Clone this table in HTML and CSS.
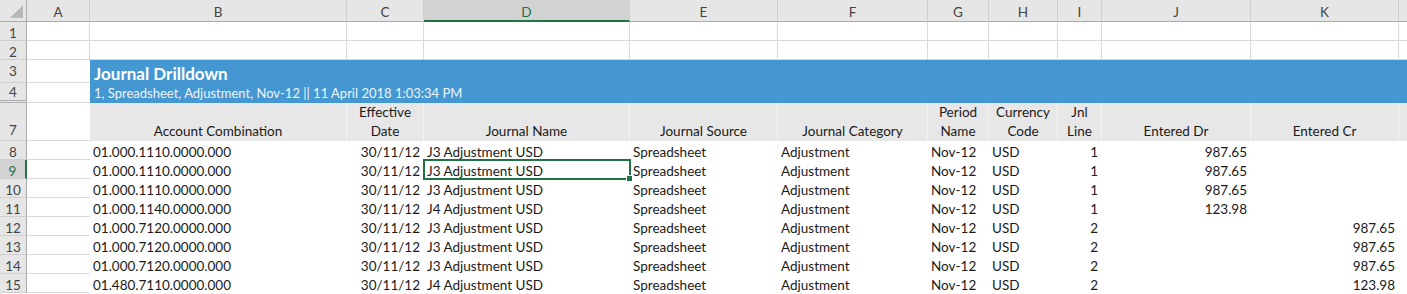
FILE: index.html
```html
<!DOCTYPE html>
<html lang="en">
<head>
    <meta charset="UTF-8">
    <title>Journal Drilldown</title>
    <link rel="stylesheet" href="styles.css">
</head>
<body>
    <div class="sheet">
        <!-- column headers -->
        <div class="corner"><span class="corner-mark"></span></div>
        <div class="col-head">A</div>
        <div class="col-head">B</div>
        <div class="col-head">C</div>
        <div class="col-head active">D</div>
        <div class="col-head">E</div>
        <div class="col-head">F</div>
        <div class="col-head">G</div>
        <div class="col-head">H</div>
        <div class="col-head">I</div>
        <div class="col-head">J</div>
        <div class="col-head">K</div>
        <div class="col-head last"></div>

        <!-- rows 1-2 -->
        <div class="row-head">1</div>
        <div class="cell"></div><div class="cell"></div><div class="cell"></div><div class="cell"></div><div class="cell"></div><div class="cell"></div>
        <div class="cell"></div><div class="cell"></div><div class="cell"></div><div class="cell"></div><div class="cell"></div><div class="cell last"></div>
        <div class="row-head">2</div>
        <div class="cell"></div><div class="cell"></div><div class="cell"></div><div class="cell"></div><div class="cell"></div><div class="cell"></div>
        <div class="cell"></div><div class="cell"></div><div class="cell"></div><div class="cell"></div><div class="cell"></div><div class="cell last"></div>

        <!-- title band -->
        <div class="row-head">3</div>
        <div class="cell plain-a"></div>
        <div class="banner title">Journal Drilldown</div>
        <div class="row-head hidden-after">4</div>
        <div class="cell plain-a"></div>
        <div class="banner subtitle">1, Spreadsheet, Adjustment, Nov-12 || 11 April 2018 1:03:34 PM</div>

        <!-- column titles -->
        <div class="row-head tall">7</div>
        <div class="cell plain-a"></div>
        <div class="th">Account Combination</div>
        <div class="th">Effective<br>Date</div>
        <div class="th">Journal Name</div>
        <div class="th">Journal Source</div>
        <div class="th">Journal Category</div>
        <div class="th">Period<br>Name</div>
        <div class="th">Currency<br>Code</div>
        <div class="th">Jnl<br>Line</div>
        <div class="th">Entered Dr</div>
        <div class="th">Entered Cr</div>
        <div class="th last"></div>

        <div class="row-head">8</div>
        <div class="cell plain-a"></div>
        <div class="td">01.000.1110.0000.000</div><div class="td num">30/11/12</div><div class="td">J3 Adjustment USD</div>
        <div class="td">Spreadsheet</div><div class="td">Adjustment</div><div class="td">Nov-12</div><div class="td">USD</div>
        <div class="td num">1</div><div class="td num">987.65</div><div class="td num"></div><div class="td"></div>

        <div class="row-head active">9</div>
        <div class="cell plain-a"></div>
        <div class="td">01.000.1110.0000.000</div><div class="td num">30/11/12</div><div class="td selected">J3 Adjustment USD<span class="fill-handle"></span></div>
        <div class="td">Spreadsheet</div><div class="td">Adjustment</div><div class="td">Nov-12</div><div class="td">USD</div>
        <div class="td num">1</div><div class="td num">987.65</div><div class="td num"></div><div class="td"></div>

        <div class="row-head">10</div>
        <div class="cell plain-a"></div>
        <div class="td">01.000.1110.0000.000</div><div class="td num">30/11/12</div><div class="td">J3 Adjustment USD</div>
        <div class="td">Spreadsheet</div><div class="td">Adjustment</div><div class="td">Nov-12</div><div class="td">USD</div>
        <div class="td num">1</div><div class="td num">987.65</div><div class="td num"></div><div class="td"></div>

        <div class="row-head">11</div>
        <div class="cell plain-a"></div>
        <div class="td">01.000.1140.0000.000</div><div class="td num">30/11/12</div><div class="td">J4 Adjustment USD</div>
        <div class="td">Spreadsheet</div><div class="td">Adjustment</div><div class="td">Nov-12</div><div class="td">USD</div>
        <div class="td num">1</div><div class="td num">123.98</div><div class="td num"></div><div class="td"></div>

        <div class="row-head">12</div>
        <div class="cell plain-a"></div>
        <div class="td">01.000.7120.0000.000</div><div class="td num">30/11/12</div><div class="td">J3 Adjustment USD</div>
        <div class="td">Spreadsheet</div><div class="td">Adjustment</div><div class="td">Nov-12</div><div class="td">USD</div>
        <div class="td num">2</div><div class="td num"></div><div class="td num">987.65</div><div class="td"></div>

        <div class="row-head">13</div>
        <div class="cell plain-a"></div>
        <div class="td">01.000.7120.0000.000</div><div class="td num">30/11/12</div><div class="td">J3 Adjustment USD</div>
        <div class="td">Spreadsheet</div><div class="td">Adjustment</div><div class="td">Nov-12</div><div class="td">USD</div>
        <div class="td num">2</div><div class="td num"></div><div class="td num">987.65</div><div class="td"></div>

        <div class="row-head">14</div>
        <div class="cell plain-a"></div>
        <div class="td">01.000.7120.0000.000</div><div class="td num">30/11/12</div><div class="td">J3 Adjustment USD</div>
        <div class="td">Spreadsheet</div><div class="td">Adjustment</div><div class="td">Nov-12</div><div class="td">USD</div>
        <div class="td num">2</div><div class="td num"></div><div class="td num">987.65</div><div class="td"></div>

        <div class="row-head">15</div>
        <div class="cell plain-a"></div>
        <div class="td">01.480.7110.0000.000</div><div class="td num">30/11/12</div><div class="td">J4 Adjustment USD</div>
        <div class="td">Spreadsheet</div><div class="td">Adjustment</div><div class="td">Nov-12</div><div class="td">USD</div>
        <div class="td num">2</div><div class="td num"></div><div class="td num">123.98</div><div class="td"></div>
    </div>
</body>
</html>
```

FILE: styles.css
```css
body {
    margin: 0;
    background: #fff;
    font-family: Lato, "Open Sans", sans-serif;
    font-size: 13.5px;
    color: #1a1a1a;
    overflow: hidden;
}
.sheet {
    display: grid;
    grid-template-columns: 27px 63px 257px 77px 206px 148px 150px 61px 69px 44px 149px 148px 1fr;
    grid-template-rows: 22px 19px 19px 23px 20px 38px repeat(8, 19px);
    width: 1407px;
}
.sheet > div {
    box-sizing: border-box;
    white-space: nowrap;
    overflow: hidden;
}

/* headers */
.corner {
    position: relative;
    background: #e6e6e6;
    border-right: 1px solid #ababab;
    border-bottom: 1px solid #ababab;
}
.corner-mark {
    position: absolute;
    right: 3px;
    bottom: 3px;
    width: 0;
    height: 0;
    border-left: 13px solid transparent;
    border-bottom: 13px solid #b7b7b7;
}
.col-head {
    background: #e6e6e6;
    border-right: 1px solid #cfcfcf;
    border-bottom: 1px solid #ababab;
    text-align: center;
    line-height: 21px;
    padding-top: 2px;
    color: #444;
}
.col-head.active {
    background: #d2d2d2;
    color: #217346;
    border-bottom: 2px solid #217346;
}
.col-head.last {
    border-right: none;
}
.row-head {
    background: #e6e6e6;
    border-right: 1px solid #ababab;
    border-bottom: 1px solid #cfcfcf;
    text-align: center;
    line-height: 19px;
    padding-top: 2px;
    color: #444;
}
.row-head.active {
    background: #d2d2d2;
    color: #217346;
    border-right: 2px solid #217346;
}
.row-head.hidden-after {
    border-bottom: 3px double #b0b0b0;
    padding-top: 0;
}
.row-head.tall {
    display: flex;
    align-items: flex-end;
    justify-content: center;
    padding-top: 0;
}

/* cells */
.cell {
    border-right: 1px solid #dadada;
    border-bottom: 1px solid #dadada;
}
.cell.last {
    border-right: none;
}
.cell.plain-a {
    border-right: none;
}
.banner {
    grid-column: 3 / -1;
    background: #4497d0;
    color: #fff;
    padding-left: 4px;
}
.banner.title {
    font-size: 17px;
    font-weight: bold;
    line-height: 25px;
    padding-top: 1px;
}
.banner.subtitle {
    font-size: 13px;
    line-height: 17px;
    padding-top: 2px;
    color: #eef4fa;
}
.th {
    background: #e7e7e7;
    border-right: 1px solid #f3f3f3;
    display: flex;
    align-items: flex-end;
    justify-content: center;
    text-align: center;
    line-height: 19px;
    white-space: normal !important;
}
.th.last {
    border-right: none;
}
.td {
    line-height: 19px;
    padding: 2px 3px 0;
}
.td.num {
    text-align: right;
    padding-right: 4px;
}
.td.selected {
    position: relative;
    overflow: visible !important;
    outline: 2px solid #217346;
    outline-offset: -1px;
    z-index: 1;
}
.fill-handle {
    position: absolute;
    right: -3px;
    bottom: -3px;
    width: 5px;
    height: 5px;
    background: #217346;
    border: 1px solid #fff;
}
```
